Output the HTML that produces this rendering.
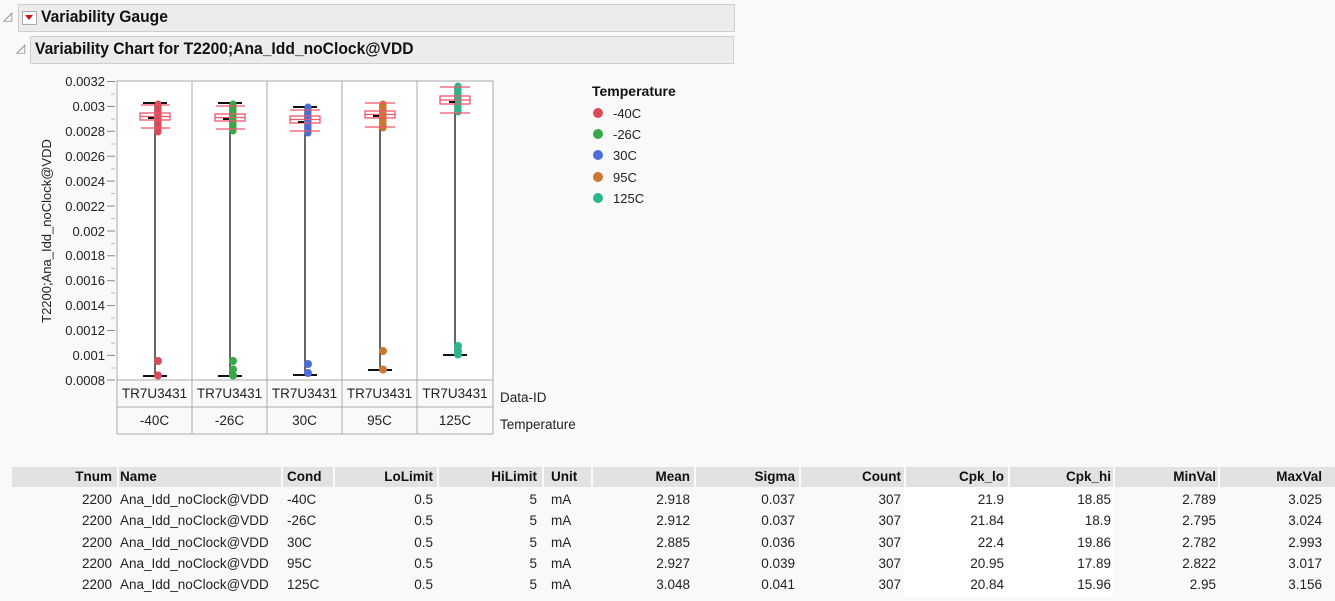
<!DOCTYPE html>
<html><head><meta charset="utf-8"><style>
body{margin:0;width:1335px;height:601px;background:#f9f9f9;font-family:"Liberation Sans",sans-serif;position:relative;overflow:hidden;color:#222}
.a{position:absolute;white-space:nowrap}
.bar{position:absolute;background:#ececec;border:1px solid #cfcfcf}
.h{font-weight:bold;color:#111}
.r{text-align:right}
.t{font-size:13.5px}
</style></head><body>
<div class="a" style="left:3px;top:9px;font-size:12px;color:#777">◿</div>
<div class="bar" style="left:18px;top:4px;width:715px;height:26px"></div>
<div class="a" style="left:22px;top:11px;width:13px;height:12px;background:#fff;border:1px solid #aaa"></div>
<svg class="a" style="left:24px;top:14px" width="10" height="7"><path d="M1 1 L9 1 L5 6Z" fill="#d01010"/></svg>
<div class="a h" style="left:41px;top:7px;font-size:17px;transform:scaleX(0.92);transform-origin:left">Variability Gauge</div>
<div class="a" style="left:16px;top:41px;font-size:12px;color:#777">◿</div>
<div class="bar" style="left:30px;top:36px;width:702px;height:26px"></div>
<div class="a h" style="left:35px;top:39px;font-size:17px;transform:scaleX(0.92);transform-origin:left">Variability Chart for T2200;Ana_Idd_noClock@VDD</div>

<svg class="a" style="left:0;top:0" width="720" height="440" font-family="Liberation Sans, sans-serif" font-size="13">
<rect x="117" y="81" width="376" height="299" fill="#fff" stroke="#aaa"/>
<g stroke="#aaa"><line x1="192" y1="81" x2="192" y2="434"/><line x1="267" y1="81" x2="267" y2="434"/><line x1="342" y1="81" x2="342" y2="434"/><line x1="417" y1="81" x2="417" y2="434"/><line x1="117" y1="380" x2="117" y2="434"/><line x1="493" y1="380" x2="493" y2="434"/><line x1="117" y1="407" x2="493" y2="407"/><line x1="117" y1="434" x2="493" y2="434"/></g>
<g stroke="#888">
<line x1="107" y1="81.5" x2="115" y2="81.5"/><line x1="107" y1="106.4" x2="115" y2="106.4"/><line x1="107" y1="131.3" x2="115" y2="131.3"/><line x1="107" y1="156.2" x2="115" y2="156.2"/><line x1="107" y1="181.1" x2="115" y2="181.1"/><line x1="107" y1="206" x2="115" y2="206"/><line x1="107" y1="231" x2="115" y2="231"/><line x1="107" y1="255.8" x2="115" y2="255.8"/><line x1="107" y1="280.7" x2="115" y2="280.7"/><line x1="107" y1="305.6" x2="115" y2="305.6"/><line x1="107" y1="330.5" x2="115" y2="330.5"/><line x1="107" y1="355.4" x2="115" y2="355.4"/><line x1="107" y1="380" x2="115" y2="380"/>
<g stroke="#bbb"><line x1="111" y1="94" x2="115" y2="94"/><line x1="111" y1="119" x2="115" y2="119"/><line x1="111" y1="144" x2="115" y2="144"/><line x1="111" y1="169" x2="115" y2="169"/><line x1="111" y1="193.5" x2="115" y2="193.5"/><line x1="111" y1="218.5" x2="115" y2="218.5"/><line x1="111" y1="243.5" x2="115" y2="243.5"/><line x1="111" y1="268.5" x2="115" y2="268.5"/><line x1="111" y1="293" x2="115" y2="293"/><line x1="111" y1="318" x2="115" y2="318"/><line x1="111" y1="343" x2="115" y2="343"/><line x1="111" y1="368" x2="115" y2="368"/></g>
</g>
<g text-anchor="end" fill="#222">
<text x="105" y="86">0.0032</text><text x="105" y="111">0.003</text><text x="105" y="136">0.0028</text><text x="105" y="161">0.0026</text><text x="105" y="186">0.0024</text><text x="105" y="211">0.0022</text><text x="105" y="236">0.002</text><text x="105" y="260">0.0018</text><text x="105" y="285">0.0016</text><text x="105" y="310">0.0014</text><text x="105" y="335">0.0012</text><text x="105" y="360">0.001</text><text x="105" y="385">0.0008</text>
</g>
<text transform="translate(51,231) rotate(-90)" text-anchor="middle" fill="#222">T2200;Ana_Idd_noClock@VDD</text>

<g>
<line x1="155" y1="103" x2="155" y2="376" stroke="#333" stroke-width="1.5"/>
<line x1="143" y1="103" x2="167" y2="103" stroke="#111" stroke-width="2"/>
<line x1="143" y1="376" x2="167" y2="376" stroke="#111" stroke-width="2"/>
<line x1="158" y1="104" x2="158" y2="132" stroke="#d94a5a" stroke-width="7" stroke-linecap="round"/>
<g stroke="#f0556a" fill="none" stroke-width="1.3"><line x1="141" y1="105" x2="170" y2="105"/><line x1="141" y1="128" x2="170" y2="128"/><rect x="140" y="113" width="30" height="7"/><line x1="140" y1="116.5" x2="170" y2="116.5"/></g>
<line x1="148" y1="118" x2="154" y2="118" stroke="#111" stroke-width="2"/>
<circle cx="158" cy="361" r="4" fill="#d94a5a"/><circle cx="158" cy="375.5" r="4" fill="#d94a5a"/>
</g>
<g>
<line x1="230" y1="103" x2="230" y2="376" stroke="#333" stroke-width="1.5"/>
<line x1="218" y1="103" x2="242" y2="103" stroke="#111" stroke-width="2"/>
<line x1="218" y1="376" x2="242" y2="376" stroke="#111" stroke-width="2"/>
<line x1="233" y1="104" x2="233" y2="131" stroke="#3aa847" stroke-width="7" stroke-linecap="round"/>
<g stroke="#f0556a" fill="none" stroke-width="1.3"><line x1="216" y1="106" x2="245" y2="106"/><line x1="216" y1="129" x2="245" y2="129"/><rect x="215" y="114" width="30" height="7"/><line x1="215" y1="117.5" x2="245" y2="117.5"/></g>
<line x1="223" y1="119" x2="229" y2="119" stroke="#111" stroke-width="2"/>
<circle cx="233" cy="361" r="4" fill="#3aa847"/><circle cx="233" cy="369.5" r="4" fill="#3aa847"/><circle cx="233" cy="375.5" r="4" fill="#3aa847"/>
</g>
<g>
<line x1="305" y1="107" x2="305" y2="375" stroke="#333" stroke-width="1.5"/>
<line x1="293" y1="107" x2="317" y2="107" stroke="#111" stroke-width="2"/>
<line x1="293" y1="375" x2="317" y2="375" stroke="#111" stroke-width="2"/>
<line x1="308" y1="107" x2="308" y2="133" stroke="#4a6fdc" stroke-width="7" stroke-linecap="round"/>
<g stroke="#f0556a" fill="none" stroke-width="1.3"><line x1="290" y1="110" x2="320" y2="110"/><line x1="290" y1="131" x2="320" y2="131"/><rect x="290" y="116" width="30" height="7"/><line x1="290" y1="119.5" x2="320" y2="119.5"/></g>
<line x1="298" y1="122" x2="304" y2="122" stroke="#111" stroke-width="2"/>
<circle cx="308" cy="364" r="4" fill="#4a6fdc"/><circle cx="308" cy="373" r="4" fill="#4a6fdc"/>
</g>
<g>
<line x1="380" y1="104" x2="380" y2="370" stroke="#333" stroke-width="1.5"/>
<line x1="368" y1="370" x2="392" y2="370" stroke="#111" stroke-width="2"/>
<line x1="383" y1="104" x2="383" y2="128" stroke="#c87830" stroke-width="7" stroke-linecap="round"/>
<g stroke="#f0556a" fill="none" stroke-width="1.3"><line x1="365" y1="103" x2="395" y2="103"/><line x1="365" y1="127" x2="395" y2="127"/><rect x="365" y="111" width="30" height="7"/><line x1="365" y1="114.5" x2="395" y2="114.5"/></g>
<line x1="373" y1="116" x2="379" y2="116" stroke="#111" stroke-width="2"/>
<circle cx="383" cy="351" r="4" fill="#c87830"/><circle cx="383" cy="369.5" r="4" fill="#c87830"/>
</g>
<g>
<line x1="455" y1="87" x2="455" y2="355" stroke="#333" stroke-width="1.5"/>
<line x1="443" y1="355" x2="467" y2="355" stroke="#111" stroke-width="2"/>
<line x1="458" y1="86" x2="458" y2="112" stroke="#2bb58a" stroke-width="7" stroke-linecap="round"/>
<g stroke="#f0556a" fill="none" stroke-width="1.3"><line x1="440" y1="87" x2="470" y2="87"/><line x1="440" y1="113" x2="470" y2="113"/><rect x="440" y="96" width="30" height="8"/><line x1="440" y1="100" x2="470" y2="100"/></g>
<line x1="449" y1="102" x2="455" y2="102" stroke="#111" stroke-width="2"/>
<circle cx="458" cy="346" r="4" fill="#2bb58a"/><circle cx="458" cy="351" r="4" fill="#2bb58a"/><circle cx="458" cy="354.5" r="4" fill="#2bb58a"/>
</g>

<g text-anchor="middle" fill="#222" font-size="13.5">
<text x="154.5" y="398">TR7U3431</text><text x="229.5" y="398">TR7U3431</text><text x="304.5" y="398">TR7U3431</text><text x="379.5" y="398">TR7U3431</text><text x="455" y="398">TR7U3431</text>
<text x="154.5" y="425">-40C</text><text x="229.5" y="425">-26C</text><text x="304.5" y="425">30C</text><text x="379.5" y="425">95C</text><text x="455" y="425">125C</text>
</g>
<text x="500" y="402" fill="#222" font-size="13.5">Data-ID</text>
<text x="500" y="429" fill="#222" font-size="13.5">Temperature</text>

<text x="592" y="96" font-weight="bold" fill="#111" font-size="14">Temperature</text>
<circle cx="598" cy="113" r="5" fill="#d94a5a"/><text x="613" y="118" fill="#222">-40C</text>
<circle cx="598" cy="134" r="5" fill="#3aa847"/><text x="613" y="139" fill="#222">-26C</text>
<circle cx="598" cy="155" r="5" fill="#4a6fdc"/><text x="613" y="160" fill="#222">30C</text>
<circle cx="598" cy="177" r="5" fill="#c87830"/><text x="613" y="182" fill="#222">95C</text>
<circle cx="598" cy="198" r="5" fill="#2bb58a"/><text x="613" y="203" fill="#222">125C</text>
</svg>

<div class="a" style="left:12px;top:467px;width:1323px;height:20px;background:#e2e2e2"></div>
<div class="a" style="left:904px;top:487px;width:209px;height:110px;background:#fff"></div>
<div class="a" style="left:117px;top:467px;width:2px;height:20px;background:#fafafa"></div>
<div class="a" style="left:281px;top:467px;width:2px;height:20px;background:#fafafa"></div>
<div class="a" style="left:333px;top:467px;width:2px;height:20px;background:#fafafa"></div>
<div class="a" style="left:437px;top:467px;width:2px;height:20px;background:#fafafa"></div>
<div class="a" style="left:542px;top:467px;width:2px;height:20px;background:#fafafa"></div>
<div class="a" style="left:591px;top:467px;width:2px;height:20px;background:#fafafa"></div>
<div class="a" style="left:694px;top:467px;width:2px;height:20px;background:#fafafa"></div>
<div class="a" style="left:799px;top:467px;width:2px;height:20px;background:#fafafa"></div>
<div class="a" style="left:904px;top:467px;width:2px;height:20px;background:#fafafa"></div>
<div class="a" style="left:1008px;top:467px;width:2px;height:20px;background:#fafafa"></div>
<div class="a" style="left:1113px;top:467px;width:2px;height:20px;background:#fafafa"></div>
<div class="a" style="left:1218px;top:467px;width:2px;height:20px;background:#fafafa"></div>

<div class="a t h" style="top:469px;right:1223px">Tnum</div>
<div class="a t h" style="top:469px;left:120px">Name</div>
<div class="a t h" style="top:469px;left:287px">Cond</div>
<div class="a t h" style="top:469px;right:902px">LoLimit</div>
<div class="a t h" style="top:469px;right:798px">HiLimit</div>
<div class="a t h" style="top:469px;left:551px">Unit</div>
<div class="a t h" style="top:469px;right:645px">Mean</div>
<div class="a t h" style="top:469px;right:540px">Sigma</div>
<div class="a t h" style="top:469px;right:434px">Count</div>
<div class="a t h" style="top:469px;right:331px">Cpk_lo</div>
<div class="a t h" style="top:469px;right:224px">Cpk_hi</div>
<div class="a t h" style="top:469px;right:119px">MinVal</div>
<div class="a t h" style="top:469px;right:13px">MaxVal</div>

<div class="a t" style="top:489px;left:0;width:1335px;line-height:21.3px">
<div class="a r" style="right:1223px">2200<br>2200<br>2200<br>2200<br>2200</div>
<div class="a" style="left:120px">Ana_Idd_noClock@VDD<br>Ana_Idd_noClock@VDD<br>Ana_Idd_noClock@VDD<br>Ana_Idd_noClock@VDD<br>Ana_Idd_noClock@VDD</div>
<div class="a" style="left:287px">-40C<br>-26C<br>30C<br>95C<br>125C</div>
<div class="a r" style="right:902px">0.5<br>0.5<br>0.5<br>0.5<br>0.5</div>
<div class="a r" style="right:798px">5<br>5<br>5<br>5<br>5</div>
<div class="a" style="left:551px">mA<br>mA<br>mA<br>mA<br>mA</div>
<div class="a r" style="right:645px">2.918<br>2.912<br>2.885<br>2.927<br>3.048</div>
<div class="a r" style="right:540px">0.037<br>0.037<br>0.036<br>0.039<br>0.041</div>
<div class="a r" style="right:434px">307<br>307<br>307<br>307<br>307</div>
<div class="a r" style="right:331px">21.9<br>21.84<br>22.4<br>20.95<br>20.84</div>
<div class="a r" style="right:224px">18.85<br>18.9<br>19.86<br>17.89<br>15.96</div>
<div class="a r" style="right:119px">2.789<br>2.795<br>2.782<br>2.822<br>2.95</div>
<div class="a r" style="right:13px">3.025<br>3.024<br>2.993<br>3.017<br>3.156</div>
</div>
</body></html>
